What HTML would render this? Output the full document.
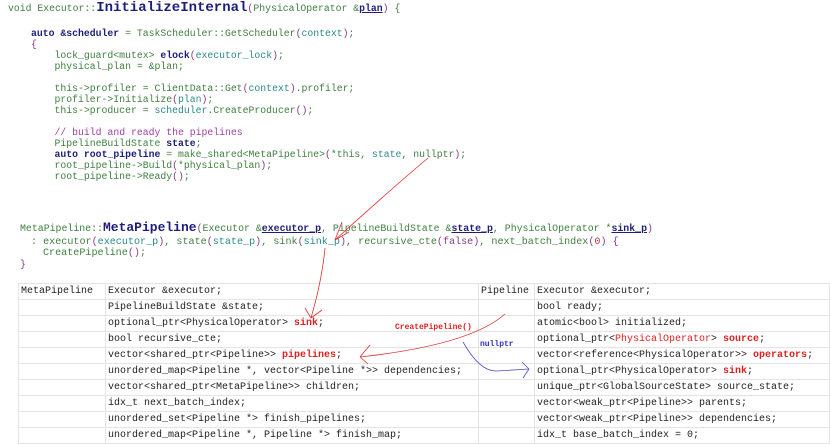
<!DOCTYPE html>
<html><head><meta charset="utf-8"><style>
body{margin:0;width:830px;height:447px;background:#fff;overflow:hidden;position:relative;font-family:"Liberation Mono",monospace}
.c{position:absolute;white-space:pre;font-size:9.8px;color:#3f7f3f;line-height:11px}
.k{color:#1e1e7a;font-weight:bold}
.p{color:#8a3a8a}
.t{color:#2a8a8a}
.cm{color:#a040a0}
.u{color:#1e1e7a;font-weight:bold;text-decoration:underline}
table{position:absolute;left:18px;top:283px;border-collapse:collapse;font-family:"Liberation Mono",monospace;font-size:10px;color:#222}
td{border:1px solid #e4e4e4;height:15px;padding:0 2px;white-space:pre;line-height:15px}
.r{color:#e02020;font-weight:bold}
.r2{color:#e02020}
</style></head><body>
<div class="c" style="left:8px;top:3px">void Executor::<span class="k" style="font-size:14px">InitializeInternal</span><span class="p">(</span>PhysicalOperator &amp;<span class="u">plan</span><span class="p">)</span> {</div>
<div class="c" style="left:31px;top:28px"><span class="k">auto &amp;scheduler</span> = TaskScheduler::GetScheduler<span class="p">(</span><span class="t">context</span><span class="p">)</span>;
<span class="p">{</span>
    lock_guard&lt;mutex&gt; <span class="k">elock</span><span class="p">(</span><span class="t">executor_lock</span><span class="p">)</span>;
    physical_plan = &amp;plan;

    this-&gt;profiler = ClientData::Get<span class="p">(</span><span class="t">context</span><span class="p">)</span>.profiler;
    profiler-&gt;Initialize<span class="p">(</span><span class="t">plan</span><span class="p">)</span>;
    this-&gt;producer = <span class="t">scheduler</span>.CreateProducer<span class="p">()</span>;

    <span class="cm">// build and ready the pipelines</span>
    PipelineBuildState <span class="k">state</span>;
    <span class="k">auto root_pipeline</span> = make_shared&lt;MetaPipeline&gt;<span class="p">(</span>*this, <span class="t">state</span>, nullptr<span class="p">)</span>;
    root_pipeline-&gt;Build<span class="p">(</span>*physical_plan<span class="p">)</span>;
    root_pipeline-&gt;Ready<span class="p">()</span>;</div>

<div class="c" style="left:20px;top:222px;font-size:9.9px">MetaPipeline::<span class="k" style="font-size:13px">MetaPipeline</span><span class="p">(</span>Executor &amp;<span class="u">executor_p</span>, PipelineBuildState &amp;<span class="u">state_p</span>, PhysicalOperator *<span class="u">sink_p</span><span class="p">)</span></div>
<div class="c" style="left:31px;top:237px;font-size:10.1px">: executor<span class="p">(</span><span class="t">executor_p</span><span class="p">)</span>, state<span class="p">(</span><span class="t">state_p</span><span class="p">)</span>, sink<span class="p">(</span><span class="t">sink_p</span><span class="p">)</span>, recursive_cte<span class="p">(false)</span>, next_batch_index<span class="p">(<span style="color:#c03030">0</span>)</span> <span class="p">{</span>
<span style="margin-left:12px"></span>CreatePipeline<span class="p">()</span>;</div>
<div class="c p" style="left:20px;top:259px">}</div>

<table>
<tr><td style="width:82px">MetaPipeline</td><td style="width:368px">Executor &amp;executor;</td><td style="width:51px">Pipeline</td><td style="width:290px">Executor &amp;executor;</td></tr>
<tr><td></td><td>PipelineBuildState &amp;state;</td><td></td><td>bool ready;</td></tr>
<tr><td></td><td>optional_ptr&lt;PhysicalOperator&gt; <span class="r">sink</span>;</td><td></td><td>atomic&lt;bool&gt; initialized;</td></tr>
<tr><td></td><td>bool recursive_cte;</td><td></td><td>optional_ptr&lt;<span class="r2">PhysicalOperator</span>&gt; <span class="r">source</span>;</td></tr>
<tr><td></td><td>vector&lt;shared_ptr&lt;Pipeline&gt;&gt; <span class="r">pipelines</span>;</td><td></td><td>vector&lt;reference&lt;PhysicalOperator&gt;&gt; <span class="r">operators</span>;</td></tr>
<tr><td></td><td>unordered_map&lt;Pipeline *, vector&lt;Pipeline *&gt;&gt; dependencies;</td><td></td><td>optional_ptr&lt;PhysicalOperator&gt; <span class="r">sink</span>;</td></tr>
<tr><td></td><td>vector&lt;shared_ptr&lt;MetaPipeline&gt;&gt; children;</td><td></td><td>unique_ptr&lt;GlobalSourceState&gt; source_state;</td></tr>
<tr><td></td><td>idx_t next_batch_index;</td><td></td><td>vector&lt;weak_ptr&lt;Pipeline&gt;&gt; parents;</td></tr>
<tr><td></td><td>unordered_set&lt;Pipeline *&gt; finish_pipelines;</td><td></td><td>vector&lt;weak_ptr&lt;Pipeline&gt;&gt; dependencies;</td></tr>
<tr><td></td><td>unordered_map&lt;Pipeline *, Pipeline *&gt; finish_map;</td><td></td><td>idx_t base_batch_index = 0;</td></tr>
</table>

<div style="position:absolute;left:395px;top:323px;font-size:8px;font-weight:bold;color:#e02020;font-family:'Liberation Mono',monospace">CreatePipeline()</div>
<div style="position:absolute;left:480px;top:340px;font-size:8px;font-weight:bold;color:#3030c0;font-family:'Liberation Mono',monospace">nullptr</div>

<svg width="830" height="447" style="position:absolute;left:0;top:0" fill="none" stroke-width="0.8">
<path d="M428 158 Q390 190 335 240 M335 240 L342 222 M335 240 L349 232" stroke="#e03030"/>
<path d="M325 248 Q322 280 311 318 M311 318 L305 308 M311 318 L322 310" stroke="#e03030"/>
<path d="M505 314 Q470 345 360 357 M360 357 L370 345 M360 357 L368 364" stroke="#e03030"/>
<path d="M463 342 Q480 372 497 371 L529 369 M529 369 L522 362 M529 369 L523 378" stroke="#5050d0"/>
</svg>
</body></html>
